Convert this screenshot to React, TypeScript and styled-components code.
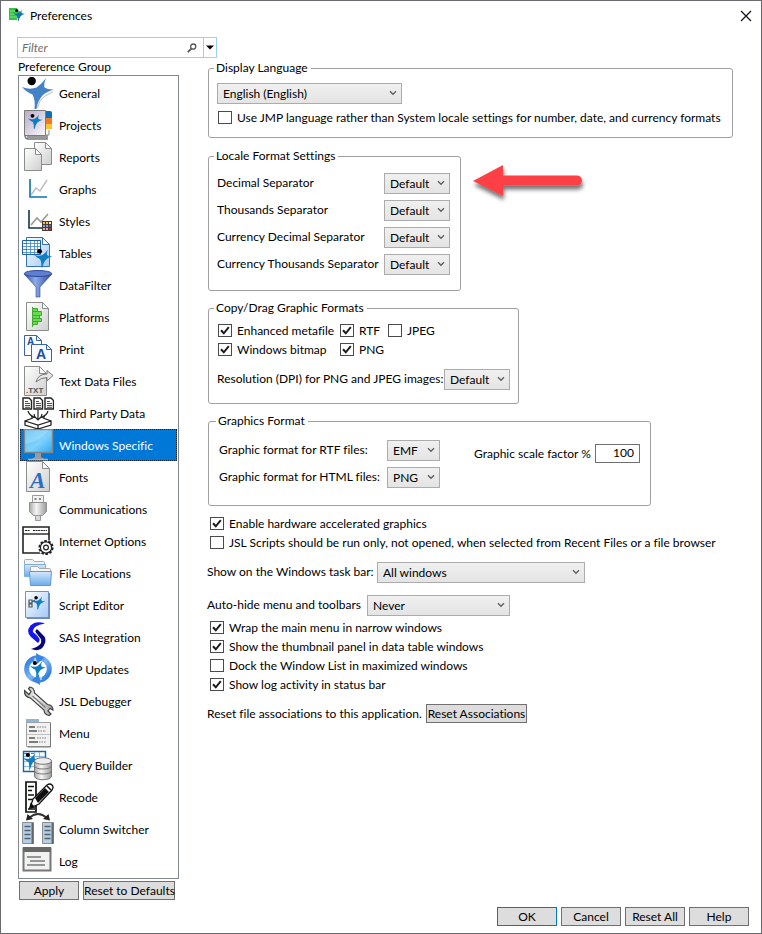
import React, { useState } from "react";
import styled, { createGlobalStyle, css } from "styled-components";

const GlobalStyle = createGlobalStyle`
  * { box-sizing: border-box; }
  html, body, #root { height: 100%; }
  body {
    margin: 0;
    background: #ffffff;
    color: #000000;
    font: 12px/16px Lato, "Open Sans", sans-serif;
    font-variant-ligatures: none;
  }
  button, input, select { font: inherit; color: inherit; margin: 0; }
`;

/* ---------- window frame ---------- */

const Window = styled.div`
  display: flex;
  flex-direction: column;
  min-height: 100%;
  border: 1px solid #6b6a70;
  background: #ffffff;
`;

const TitleBar = styled.header`
  display: flex;
  align-items: center;
  gap: 5px;
  height: 29px;
  padding: 0 9px 0 8px;
`;

const Title = styled.h1`
  flex: 1;
  margin: 0;
  font-size: 12px;
  font-weight: 400;
`;

const CloseButton = styled.button`
  display: flex;
  padding: 0;
  border: 0;
  background: none;
`;

const Content = styled.div`
  display: flex;
  flex: 1;
  align-items: flex-start;
  gap: 28px;
  padding: 7px 28px 0 17px;
`;

const Sidebar = styled.aside`
  flex: none;
  width: 161px;
`;

const FilterBox = styled.div`
  display: flex;
  width: 200px;
  height: 21px;
  margin-left: -1px;
  border: 1px solid #99d1ef;
`;

const FilterInput = styled.input`
  flex: 1;
  min-width: 0;
  padding: 0 4px;
  border: 0;
  outline: 0;
  background: transparent;
  &::placeholder { color: #6d6d6d; font-style: italic; opacity: 1; }
`;

const FilterButton = styled.button<{ $divided?: boolean }>`
  display: flex;
  align-items: center;
  justify-content: center;
  width: ${(p) => (p.$divided ? "13px" : "22px")};
  padding: 0;
  border: 0;
  border-left: ${(p) => (p.$divided ? "1px solid #99d1ef" : "0")};
  background: none;
`;

const GroupLabel = styled.h2`
  margin: 1px 0 0;
  font-size: 12px;
  font-weight: 400;
`;

const GroupList = styled.ul`
  margin: 0;
  padding: 1px;
  list-style: none;
  border: 1px solid #828790;
`;

const GroupItem = styled.button<{ $selected: boolean }>`
  display: flex;
  align-items: center;
  gap: 5px;
  width: 100%;
  height: 32px;
  padding: 0 1px;
  border: 1px solid transparent;
  background: none;
  text-align: left;
  white-space: nowrap;
  ${(p) =>
    p.$selected &&
    css`
      background: #0078d7;
      border: 1px dotted #10243c;
      color: #ffffff;
    `}
`;

const ItemIcon = styled.svg`
  flex: none;
  width: 32px;
  height: 32px;
`;

const ItemText = styled.span`
  padding-top: 2px;
`;

const ButtonRow = styled.div<{ $footer?: boolean }>`
  display: flex;
  gap: 4px;
  ${(p) =>
    p.$footer
      ? css`
          justify-content: flex-end;
          padding: 0 12px 7px;
        `
      : css`
          padding: 2px 0 0 1px;
        `}
`;

const PushButton = styled.button<{ $primary?: boolean; $width?: string }>`
  flex: none;
  width: ${(p) => p.$width ?? "60px"};
  height: 19px;
  padding: 0;
  border: 1px solid ${(p) => (p.$primary ? "#0078d7" : "#707070")};
  background: #dddddd;
  line-height: 17px;
  text-align: center;
  white-space: nowrap;
`;

/* ---------- settings panel ---------- */

const Settings = styled.main`
  flex: 1;
  min-width: 0;
  padding-top: 23px;
`;

const Group = styled.fieldset<{ $fit?: boolean; $pad: string; $after?: string }>`
  width: ${(p) => (p.$fit ? "fit-content" : "auto")};
  min-width: 0;
  margin: 0 0 ${(p) => p.$after ?? "9px"} 1px;
  padding: ${(p) => p.$pad};
  border: 1px solid #a0a0a0;
  border-radius: 3px;
`;

const Legend = styled.legend`
  margin-left: -3px;
  padding: 0 3px 0 2px;
`;

const CalloutRow = styled.div`
  display: flex;
  align-items: flex-start;
  gap: 10px;
`;

const Callout = styled.svg`
  flex: none;
  width: 116px;
  height: 48px;
  margin-top: 14px;
`;

const FormGrid = styled.div<{ $label: string; $control: string }>`
  display: grid;
  grid-template-columns: ${(p) => p.$label} ${(p) => p.$control};
  gap: 6px 0;
`;

const Split = styled.div`
  display: flex;
  align-items: flex-start;
  gap: 34px;
`;

const Field = styled.div<{ $top?: string }>`
  display: flex;
  margin-top: ${(p) => p.$top ?? "0"};
  gap: 4px;
`;

const FieldLabel = styled.label<{ $width?: string }>`
  width: ${(p) => p.$width ?? "auto"};
  height: 19px;
  line-height: 19px;
  white-space: nowrap;
`;

const SelectShell = styled.span<{ $width: string }>`
  display: grid;
  flex: none;
  align-items: center;
  width: ${(p) => p.$width};
  height: 21px;
`;

const SelectControl = styled.select`
  grid-area: 1 / 1;
  width: 100%;
  height: 21px;
  padding: 0 16px 0 5px;
  border: 1px solid #acacac;
  border-radius: 0;
  appearance: none;
  background: linear-gradient(#f0f0f0, #e4e4e4);
`;

const SelectArrow = styled.svg`
  grid-area: 1 / 1;
  justify-self: end;
  width: 8px;
  height: 6px;
  margin: 0 5px 2px 0;
  pointer-events: none;
`;

const CheckLabel = styled.label`
  display: flex;
  align-items: center;
  gap: 5px;
  height: 19px;
  white-space: nowrap;
`;

const CheckShell = styled.span`
  display: grid;
  flex: none;
  width: 14px;
  height: 13px;
`;

const CheckControl = styled.input`
  grid-area: 1 / 1;
  width: 14px;
  height: 13px;
  border: 1px solid #4a4a4a;
  appearance: none;
  background: #ffffff;
`;

const CheckMark = styled.svg`
  grid-area: 1 / 1;
  width: 14px;
  height: 13px;
  pointer-events: none;
`;

const CheckList = styled.div<{ $indent: string; $top?: string }>`
  margin-top: ${(p) => p.$top ?? "0"};
  padding-left: ${(p) => p.$indent};
`;

const CheckGrid = styled.div`
  display: grid;
  grid-template-columns: 122px 48px auto;
  padding-left: 1px;
`;

const NumberInput = styled.input`
  width: 45px;
  height: 19px;
  padding: 0 5px 2px;
  border: 1px solid #707070;
  text-align: right;
`;

function Select({ id, width, options }: { id: string; width: string; options: string[] }) {
  return (
    <SelectShell $width={width}>
      <SelectControl id={id}>
        {options.map((o) => (
          <option key={o}>{o}</option>
        ))}
      </SelectControl>
      <SelectArrow viewBox="0 0 8 6">
        <path d="M1 1.2 4 4.2 7 1.2" fill="none" stroke="#606060" strokeWidth="1.4" />
      </SelectArrow>
    </SelectShell>
  );
}

function Check({ label, on = false }: { label: string; on?: boolean }) {
  const [checked, setChecked] = useState(on);
  return (
    <CheckLabel>
      <CheckShell>
        <CheckControl type="checkbox" checked={checked} onChange={(e) => setChecked(e.target.checked)} />
        {checked && (
          <CheckMark viewBox="0 0 14 13">
            <path d="M3 6.3 5.8 9.3 10.8 3.2" fill="none" stroke="#1c1c1c" strokeWidth="2" />
          </CheckMark>
        )}
      </CheckShell>
      {label}
    </CheckLabel>
  );
}

/* ---------- icons ---------- */

const DefsSvg = styled.svg`
  position: absolute;
  width: 0;
  height: 0;
`;

const Defs = () => (
  <DefsSvg aria-hidden="true">
    <defs>
      <linearGradient id="paper" x1="0" y1="0" x2="1" y2="1">
        <stop offset="0" stopColor="#ffffff" />
        <stop offset="1" stopColor="#cfcfcf" />
      </linearGradient>
      <linearGradient id="bluePaper" x1="0" y1="0" x2="1" y2="1">
        <stop offset="0" stopColor="#ffffff" />
        <stop offset="1" stopColor="#a3c8f5" />
      </linearGradient>
      <linearGradient id="cover" x1="0" y1="0" x2="1" y2="1">
        <stop offset="0" stopColor="#b9aac6" />
        <stop offset="1" stopColor="#fbf9fd" />
      </linearGradient>
      <linearGradient id="screen" x1="0" y1="0" x2="1" y2="1">
        <stop offset="0" stopColor="#4fb9f3" />
        <stop offset="0.55" stopColor="#7fd2fc" />
        <stop offset="1" stopColor="#2ba9f2" />
      </linearGradient>
      <linearGradient id="funnel" x1="0" y1="0" x2="1" y2="0">
        <stop offset="0" stopColor="#2c4ea8" />
        <stop offset="0.4" stopColor="#8fa9e8" />
        <stop offset="1" stopColor="#27479c" />
      </linearGradient>
      <linearGradient id="folder" x1="0" y1="0" x2="0" y2="1">
        <stop offset="0" stopColor="#d4e9fb" />
        <stop offset="1" stopColor="#6cabec" />
      </linearGradient>
      <linearGradient id="metal" x1="0" y1="0" x2="1" y2="0">
        <stop offset="0" stopColor="#a9a9a9" />
        <stop offset="0.4" stopColor="#f6f6f6" />
        <stop offset="1" stopColor="#9a9a9a" />
      </linearGradient>
      <linearGradient id="ring" x1="0" y1="0" x2="1" y2="1">
        <stop offset="0" stopColor="#2479dc" />
        <stop offset="0.5" stopColor="#7db5f2" />
        <stop offset="1" stopColor="#1e6fd6" />
      </linearGradient>
    </defs>
  </DefsSvg>
);

const Man = ({ t = "", fill = "#0f7fc4" }: { t?: string; fill?: string }) => (
  <g transform={t}>
    <path
      d="M0 10Q8 13 14.500 10.500Q20 7 24 1Q21.500 7 22.500 10.500Q26 13 32 12.500Q24 15 20.500 18.500Q15.500 24 14.500 32H12.500Q13.500 23 10.500 17.500Q5 15.500 0 10Z"
      fill={fill}
    />
    <circle cx="9.700" cy="4" r="4.200" fill="#000" />
  </g>
);

const Page = ({ x, y, w, h, fill = "url(#paper)", stroke = "#8c8c8c", f = 6 }: {
  x: number; y: number; w: number; h: number; fill?: string; stroke?: string; f?: number;
}) => (
  <g stroke={stroke} fill={fill}>
    <path d={`M${x} ${y}h${w - f}l${f} ${f}v${h - f}h${-w}z`} />
    <path d={`M${x + w - f} ${y}v${f}h${f}z`} fill="#f8f8f8" />
  </g>
);

const icons: Record<string, React.ReactNode> = {
  General: (
    <>
      <path d="M15.500 31Q16.500 24 21.500 20L31 14.500" fill="none" stroke="#9a9a9a" strokeWidth="1" opacity="0.7" />
      <Man fill="#4482c8" />
    </>
  ),
  Projects: (
    <>
      <path d="M23 2h5q2 0 2 2v5h-7z" fill="#0a72ba" />
      <path d="M23 9h7v6h-7z" fill="#f2792a" />
      <path d="M23 15h7v5h-7z" fill="#fdc22d" />
      <path d="M3 26q0 4 3 4h19v-4M5 28h19" fill="none" stroke="#777" strokeWidth="1.500" />
      <path d="M6 26h21v-5" fill="none" stroke="#8a8a8a" />
      <path d="M2.500 1.500h21v25h-21z" fill="url(#cover)" stroke="#7b7b7b" />
      <Man t="translate(6 5) scale(.46)" />
    </>
  ),
  Reports: (
    <>
      <Page x={12.5} y={1.5} w={17} h={22} />
      <Page x={2.500} y={7.5} w={17} h={22} />
    </>
  ),
  Graphs: (
    <>
      <path d="M9 22 14 15 18 18 25 7" fill="none" stroke="#bdbdbd" strokeWidth="1.400" />
      <path d="M8 6v18h17" fill="none" stroke="#0874ab" strokeWidth="1.600" />
    </>
  ),
  Styles: (
    <>
      <path d="M9 20 15 13 19 17 26 9" fill="none" stroke="#999" strokeWidth="1.600" />
      <path d="M7 5v18h14" fill="none" stroke="#113649" strokeWidth="1.600" />
      <path d="M20 16h10v10H20z" fill="#4a3b35" />
      <path d="M21 17h2v2h-2zM24 17h2v2h-2z" fill="#e8c35a" />
      <path d="M27 17h2v2h-2z" fill="#fff4a8" />
      <path d="M21 20h2v2h-2zM24 20h2v2h-2z" fill="#7aa8e0" />
      <path d="M27 20h2v2h-2z" fill="#3e6fb8" />
      <path d="M21 23h2v2h-2zM24 23h2v2h-2z" fill="#f3a7a2" />
      <path d="M27 23h2v2h-2z" fill="#d22" />
    </>
  ),
  Tables: (
    <>
      <Page x={4.500} y={0.500} w={23} h={29} fill="url(#bluePaper)" stroke="#3374ad" f={7} />
      <path d="M.5 3.500h18v14H.5z" fill="#fff" stroke="#1a62a5" />
      <path d="M1 6.500h17M1 9.500h17M1 12.500h17M1 15.500h17M4.500 4v13M8.500 4v13M12.500 4v13M15.500 4v13" stroke="#3d84c4" strokeWidth=".8" />
      <path d="M2 6.500h3M2 12.500h3" stroke="#e33" />
      <Man t="translate(12 12) scale(.58)" />
    </>
  ),
  DataFilter: (
    <>
      <path d="M2 5Q16 10 30 5L18 18v10h-4V18z" fill="url(#funnel)" stroke="#2b4a9b" strokeWidth=".6" />
      <ellipse cx="16" cy="4.500" rx="13.700" ry="3" fill="#5f7fd0" stroke="#2b4a9b" />
    </>
  ),
  Platforms: (
    <>
      <Page x={4.500} y={1.500} w={22} h={28} />
      <path d="M10.500 6v20" stroke="#45a836" />
      <g fill="#65dc4c" stroke="#45a836">
        <path d="M10.500 7.500h5v3h-5zM10.500 10.500h9v4h-9zM10.500 14.500h7v3h-7zM10.500 17.500h9v3h-9zM10.500 20.500h5v3h-5z" />
      </g>
    </>
  ),
  Print: (
    <>
      <Page x={2.500} y={2.500} w={17} h={20} fill="#fff" stroke="#3a62b3" f={5} />
      <text x="5" y="12" fontFamily="Liberation Sans" fontWeight="700" fontSize="10" fill="#1c4d9e">A</text>
      <Page x={9.500} y={11.500} w={20} h={17} fill="#f6f9ff" stroke="#3a62b3" f={5} />
      <text x="14" y="26" fontFamily="Liberation Sans" fontWeight="700" fontSize="14" fill="#1c4d9e">A</text>
    </>
  ),
  "Text Data Files": (
    <>
      <Page x={2.500} y={1.500} w={22} h={29} f={7} />
      <path d="M14 17q2-8 11-8V5.500l6 5-6 5.500v-3.500q-6 0-11 4.500z" fill="#e8e8e8" stroke="#777" />
      <text x="4" y="28" fontFamily="Liberation Sans" fontWeight="700" fontSize="8" fill="#555">.TXT</text>
    </>
  ),
  "Third Party Data": (
    <>
      {[0, 11, 22].map((x) => (
        <g key={x} transform={`translate(${x} 0)`} stroke="#222" fill="#fff">
          <path d="M1 1h6l2.500 2.500V12H1z" strokeWidth="1.400" />
          <path d="M3 4.500h3M3 6.500h5M3 8.500h5M3 10.300h5" strokeWidth=".8" />
        </g>
      ))}
      <path d="M6 14q1 4 6 6M16 13v9M26 14q-1 4-6 6M13 20l3 3 3-3M9 20l4 .5-1-3.500M23 20l-4 .5 1-3.500" fill="none" stroke="#222" strokeWidth="1.200" />
      <path d="M11 21 3 24v4l13 4 13-4v-4l-8-3M3 24l13 4 13-4M16 28v4" fill="none" stroke="#222" strokeWidth="1.300" />
    </>
  ),
  "Windows Specific": (
    <>
      <path d="M13 24h6v4l5 3H8l5-3z" fill="#9b9b9b" />
      <path d="M2.500 .5h28v23h-28z" fill="url(#screen)" stroke="#858585" strokeWidth="1.500" />
      <path d="M3 1h24Q20 12 3 15z" fill="#fff" opacity=".22" />
      <path d="M6 30.500h20" stroke="#b5b5b5" strokeWidth="1.500" />
    </>
  ),
  Fonts: (
    <>
      <Page x={4.500} y={.5} w={23} h={30} f={7} />
      <text x="8" y="26.500" fontFamily="Liberation Serif" fontStyle="italic" fontWeight="700" fontSize="23" fill="#2a6fc4">A</text>
    </>
  ),
  Communications: (
    <>
      <path d="M10.500 2.500h11v8h-11z" fill="#f1f1f1" stroke="#9a9a9a" />
      <path d="M12.500 5h2v2h-2zM17 5h2v2h-2z" fill="#888" />
      <path d="M7.500 9.500h17v9l-4 4h-9l-4-4z" fill="url(#metal)" stroke="#8f8f8f" />
      <path d="M13.500 22.500h5v5h-5z" fill="#d8d8d8" stroke="#9a9a9a" />
    </>
  ),
  "Internet Options": (
    <>
      <path d="M1 2h26v26H1z" fill="#fff" stroke="#222" strokeWidth="1.600" />
      <path d="M1 9h26" stroke="#222" strokeWidth="1.400" />
      <path d="M3 5.500h5M11 5.500h14" stroke="#222" strokeDasharray="2 .6" />
      <circle cx="24" cy="22.500" r="8" fill="#fff" />
      <circle cx="24" cy="22.500" r="6.600" fill="none" stroke="#222" strokeWidth="2" strokeDasharray="2.600 1.550" />
      <circle cx="24" cy="22.500" r="5.600" fill="#fff" stroke="#222" strokeWidth="1.200" />
      <circle cx="24" cy="22.500" r="2.400" fill="none" stroke="#222" strokeWidth="1.200" />
    </>
  ),
  "File Locations": (
    <>
      <path d="M2.500 6V3.500q0-1 1-1h7l2 2h9q1 0 1 1V8h-20z" fill="#f1f1f1" stroke="#aaa" />
      <path d="M2.500 7.500h21v12h-21z" fill="url(#folder)" stroke="#7bb0e0" />
      <path d="M8.500 14v-3.500q0-1 1-1h6l2 2h10q1 0 1 1V15h-20z" fill="#f5f5f5" stroke="#aaa" />
      <path d="M7.500 14.500h22l-1 14h-20z" fill="url(#folder)" stroke="#5d9bd8" />
    </>
  ),
  "Script Editor": (
    <>
      <path d="M5 4h23v26H5z" fill="#6e88b8" />
      <path d="M3.500 2.500h23v26h-23z" fill="url(#bluePaper)" stroke="#7191c6" />
      <path d="M7 11h3v3H7zM7 15h3v3H7zM10 13l3-2" fill="none" stroke="#555" strokeWidth="1.200" />
      <Man t="translate(10 7) scale(.42)" />
    </>
  ),
  "SAS Integration": (
    <>
      <path d="M23 2.500Q14-1 8.500 4.500Q3.500 11 9 16L16 22Q19 19 16.500 16L11 11Q9.500 5 23 2.500Z" fill="#1414f0" />
      <path d="M9 28Q18 31.500 22 24.500Q26 18 20 13L15 8Q12 10.500 14 13L18.500 18Q22 24 9 28Z" fill="#06067c" />
      <path d="M12 9.500 19 19" stroke="#fff" strokeWidth="1" />
    </>
  ),
  "JMP Updates": (
    <>
      <circle cx="16" cy="16" r="11.300" fill="#fff" stroke="url(#ring)" strokeWidth="5" />
      <path d="M14 0l8 5-7 6zM18 32l-8-5 7-6z" fill="#3585e2" />
      <path d="M13 9V5M19 23v4" stroke="#fff" />
      <Man t="translate(8 8) scale(.5)" />
    </>
  ),
  "JSL Debugger": (
    <>
      <path
        d="M2.500 5.500Q2 12 8.500 13L22 25Q22 29.500 27 30.500L29 29 26 26 28 23.500 31 25Q31 20 25.500 19.500L12.500 8Q12.500 3 8 2L6.500 3.500 9 6.500 7 9.500z"
        fill="url(#metal)"
        stroke="#444"
        strokeWidth="1.200"
      />
      <path d="M10.500 11 23.500 22.500" stroke="#777" strokeWidth="1.200" />
    </>
  ),
  Menu: (
    <>
      <path d="M4 2h13v4H4z" fill="#8bb8d2" />
      <path d="M4.500 5.500h24v24h-24z" fill="#f2f2f2" stroke="#a0a0a0" />
      <path d="M28.500 6v24h-23" fill="none" stroke="#777" />
      <path d="M5 17.500h23" stroke="#c2c2c2" />
      <path d="M7 10h6M7 14h8M7 21h6M7 25h9" stroke="#555" strokeWidth="1.600" />
      <path d="M15 10h9M16 14h8M15 21h9M17 25h7" stroke="#777" strokeDasharray="1.500 1" />
    </>
  ),
  "Query Builder": (
    <>
      <path d="M1.500 2.500h22v20h-22z" fill="#fff" stroke="#1166b0" strokeWidth="1.400" />
      <path d="M2 7.500h21M2 12.500h21M2 17.500h21M7.500 3v19M12.500 3v19M17.500 3v19" stroke="#7db0d8" strokeWidth=".9" />
      <path d="M2 4.500h5M9 4.500h3" stroke="#e44" />
      <Man t="translate(1 4) scale(.5)" />
      <path d="M12.500 12v15c0 5 17 5 17 0V12z" fill="url(#metal)" stroke="#777" />
      <ellipse cx="21" cy="12" rx="8.500" ry="3.300" fill="#eee" stroke="#777" />
      <path d="M12.500 17c0 4 17 4 17 0M12.500 22c0 4 17 4 17 0" fill="none" stroke="#777" />
    </>
  ),
  Recode: (
    <>
      <path d="M4 1h10v30H4z" fill="#fff" stroke="#111" strokeWidth="1.700" />
      <path d="M6 5.500h6M6 9.500h4M6 14h6M6 18.500h5M6 28h7" stroke="#111" strokeWidth="1.400" />
      <path d="M8 27l3-9L25 4q3-2 5 0 2 2 0 5L17 23z" fill="#fff" stroke="#111" strokeWidth="1.300" />
      <path d="M13 17 23 7l4 4-11 11z" fill="#111" />
      <path d="M25 5l4 4M8 27l1-4 3 3z" stroke="#111" strokeWidth="1.500" />
    </>
  ),
  "Column Switcher": (
    <>
      <path d="M7 5Q16-3 25 5" fill="none" stroke="#333" strokeWidth="1.800" />
      <path d="M4 7.500 5.500 1 11 6zM28 7.500 26.500 1 21 6z" fill="#222" />
      {[0.5, 20.5].map((x) => (
        <g key={x}>
          <path d={`M${x} 9.500h11v21h-11z`} fill="#b3cee8" stroke="#8e8e8e" />
          <path d={`M${x + 10} 10v21`} stroke="#666" strokeWidth="2" />
          <path d={`M${x + 2} 13.500h6M${x + 2} 17.500h6M${x + 2} 21.500h6M${x + 2} 25.500h6`} stroke="#55606b" strokeWidth="1.400" />
        </g>
      ))}
    </>
  ),
  Log: (
    <>
      <path d="M1.500 3.500h27v22h-27z" fill="#f1f1f1" stroke="#777" strokeWidth="2" />
      <path d="M1 2h28v5H1z" fill="#686868" />
      <path d="M5 12h14M8 16h15M5 20h18" stroke="#777" strokeWidth="1.600" />
    </>
  ),
};

const AppIcon = () => (
  <svg width="16" height="16" viewBox="0 0 16 16" aria-hidden="true">
    <path d="M0 0h8v3h3v2H9v3h2v2H8v2H0z" fill="#35c246" />
    <path d="M1 3h7M1 6h7M1 9h7" stroke="#7fe486" />
    <Man t="translate(4 1) scale(.38)" fill="#1272b5" />
  </svg>
);

/* ---------- page ---------- */

const separators = ["Decimal Separator", "Thousands Separator", "Currency Decimal Separator", "Currency Thousands Separator"];

export default function App() {
  const [selected, setSelected] = useState("Windows Specific");
  return (
    <Window>
      <GlobalStyle />
      <Defs />
      <TitleBar>
        <AppIcon />
        <Title>Preferences</Title>
        <CloseButton aria-label="Close">
          <svg width="12" height="12" viewBox="0 0 12 12">
            <path d="M1 1l10 10M11 1 1 11" stroke="#111" strokeWidth="1.200" />
          </svg>
        </CloseButton>
      </TitleBar>

      <Content>
        <Sidebar>
          <FilterBox>
            <FilterInput aria-label="Filter" placeholder="Filter" />
            <FilterButton aria-label="Search">
              <svg width="10" height="10" viewBox="0 0 10 10">
                <circle cx="6.200" cy="3.600" r="2.600" fill="none" stroke="#555" strokeWidth="1.300" />
                <path d="M4.400 5.600.8 9.200" stroke="#555" strokeWidth="1.800" />
              </svg>
            </FilterButton>
            <FilterButton $divided aria-label="Filter options">
              <svg width="8" height="5" viewBox="0 0 8 5">
                <path d="M0 .5h8L4 4.500z" fill="#000" />
              </svg>
            </FilterButton>
          </FilterBox>
          <GroupLabel>Preference Group</GroupLabel>
          <GroupList>
            {Object.keys(icons).map((name) => (
              <li key={name}>
                <GroupItem $selected={name === selected} onClick={() => setSelected(name)}>
                  <ItemIcon viewBox="0 0 32 32" aria-hidden="true">{icons[name]}</ItemIcon>
                  <ItemText>{name}</ItemText>
                </GroupItem>
              </li>
            ))}
          </GroupList>
          <ButtonRow>
            <PushButton>Apply</PushButton>
            <PushButton $width="92px">Reset to Defaults</PushButton>
          </ButtonRow>
        </Sidebar>

        <Settings>
          <Group $pad="7px 8px 10px" $after="10px">
            <Legend>Display Language</Legend>
            <Select id="language" width="185px" options={["English (English)"]} />
            <CheckList $indent="1px" $top="4px">
              <Check label="Use JMP language rather than System locale settings for number, date, and currency formats" />
            </CheckList>
          </Group>

          <CalloutRow>
            <Group $fit $pad="9px 10px 15px 8px">
              <Legend>Locale Format Settings</Legend>
              <FormGrid $label="167px" $control="66px">
                {separators.map((name, i) => (
                  <React.Fragment key={name}>
                    <FieldLabel htmlFor={`sep${i}`}>{name}</FieldLabel>
                    <Select id={`sep${i}`} width="66px" options={["Default"]} />
                  </React.Fragment>
                ))}
              </FormGrid>
            </Group>
            <Callout viewBox="0 0 116 48" aria-hidden="true">
              <defs>
                <filter id="shadow" x="-10%" y="-20%" width="120%" height="160%">
                  <feDropShadow dx="1" dy="4" stdDeviation="2" floodColor="#000" floodOpacity=".55" />
                </filter>
              </defs>
              <path d="M2 19 32 3v10.500h74a5 5 0 0 1 0 10H32V34z" fill="#fc4144" filter="url(#shadow)" />
            </Callout>
          </CalloutRow>

          <Group $fit $pad="5px 8px 13px 8px">
            <Legend>Copy/Drag Graphic Formats</Legend>
            <CheckGrid>
              <Check label="Enhanced metafile" on />
              <Check label="RTF" on />
              <Check label="JPEG" />
              <Check label="Windows bitmap" on />
              <Check label="PNG" on />
            </CheckGrid>
            <Field $top="10px">
              <FieldLabel $width="223px" htmlFor="dpi">Resolution (DPI) for PNG and JPEG images:</FieldLabel>
              <Select id="dpi" width="66px" options={["Default"]} />
            </Field>
          </Group>

          <Group $fit $pad="11px 10px 17px" $after="8px">
            <Legend>Graphics Format</Legend>
            <Split>
              <FormGrid $label="168px" $control="53px">
                <FieldLabel htmlFor="rtf">Graphic format for RTF files:</FieldLabel>
                <Select id="rtf" width="53px" options={["EMF"]} />
                <FieldLabel htmlFor="html">Graphic format for HTML files:</FieldLabel>
                <Select id="html" width="53px" options={["PNG"]} />
              </FormGrid>
              <Field $top="4px">
                <FieldLabel $width="117px" htmlFor="scale">Graphic scale factor %</FieldLabel>
                <NumberInput id="scale" defaultValue="100" />
              </Field>
            </Split>
          </Group>

          <CheckList $indent="3px">
            <Check label="Enable hardware accelerated graphics" on />
            <Check label="JSL Scripts should be run only, not opened, when selected from Recent Files or a file browser" />
          </CheckList>
          <Field $top="10px">
            <FieldLabel $width="166px" htmlFor="taskbar">Show on the Windows task bar:</FieldLabel>
            <Select id="taskbar" width="208px" options={["All windows"]} />
          </Field>
          <Field $top="12px">
            <FieldLabel $width="156px" htmlFor="autohide">Auto-hide menu and toolbars</FieldLabel>
            <Select id="autohide" width="143px" options={["Never"]} />
          </Field>
          <CheckList $indent="3px" $top="2px">
            <Check label="Wrap the main menu in narrow windows" on />
            <Check label="Show the thumbnail panel in data table windows" on />
            <Check label="Dock the Window List in maximized windows" />
            <Check label="Show log activity in status bar" on />
          </CheckList>
          <Field $top="10px">
            <FieldLabel as="span" $width="215px">Reset file associations to this application.</FieldLabel>
            <PushButton $width="101px">Reset Associations</PushButton>
          </Field>
        </Settings>
      </Content>

      <ButtonRow $footer>
        <PushButton $primary>OK</PushButton>
        <PushButton>Cancel</PushButton>
        <PushButton>Reset All</PushButton>
        <PushButton>Help</PushButton>
      </ButtonRow>
    </Window>
  );
}
